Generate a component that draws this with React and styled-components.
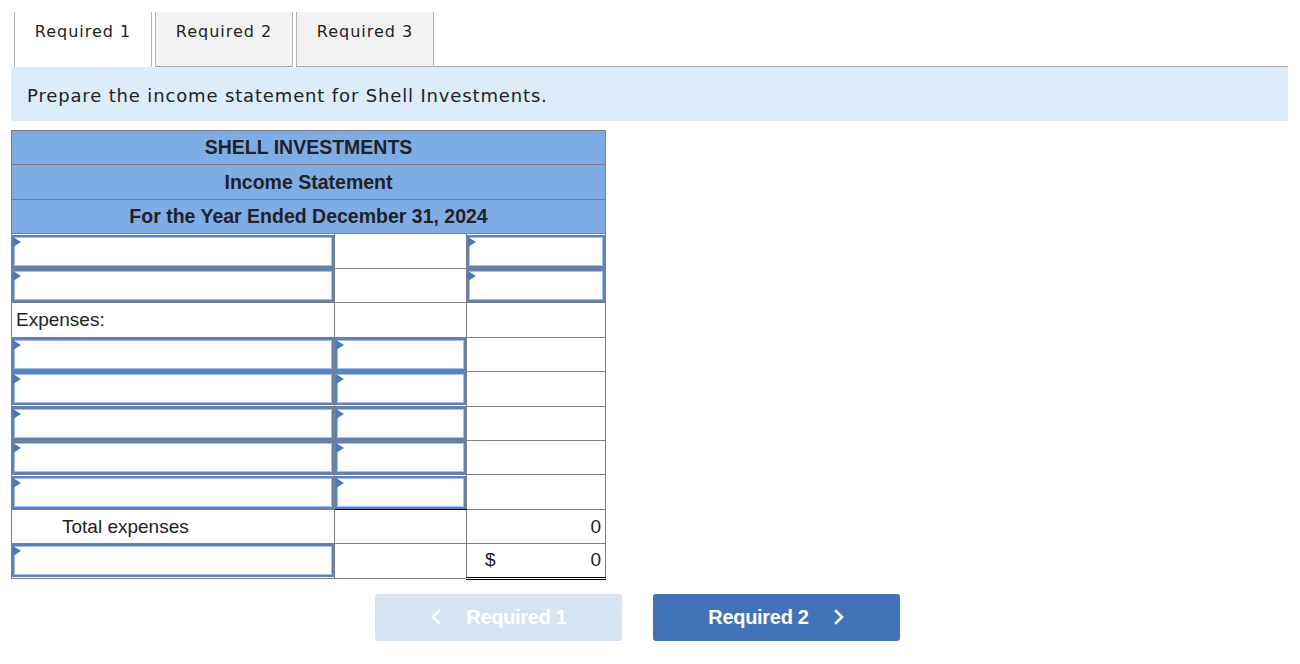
import React from 'react'
import styled, { createGlobalStyle, css } from 'styled-components'

const GlobalStyle = createGlobalStyle`
    body {
        margin: 0;
        background: #fff;
        font-family: "DejaVu Sans", Verdana, sans-serif;
    }
`

const Page = styled.div`
    padding: 12px 12px 0 11px;
`

const TabRow = styled.div`
    display: flex;
    align-items: stretch;
    height: 55px;
`

const Tab = styled.div`
    width: 138px;
    margin-left: 3px;
    display: flex;
    justify-content: center;
    padding-top: 10px;
    box-sizing: border-box;
    font-size: 16px;
    letter-spacing: 1px;
    color: #222;
    border-left: 1px solid #b5b5b5;
    border-right: 1px solid #b5b5b5;
    ${p => p.active ? css`
        background: #fff;
    ` : css`
        background: #f2f2f2;
        border-bottom: 1px solid #a6a6a6;
    `}
`

const TabFiller = styled.div`
    flex: 1;
    border-bottom: 1px solid #a6a6a6;
`

const Instruction = styled.div`
    width: 1277px;
    height: 54px;
    background: #dcecf8;
    display: flex;
    align-items: center;
    padding-left: 16px;
    padding-top: 2px;
    box-sizing: border-box;
    font-size: 18px;
    letter-spacing: 0.85px;
    color: #222;
`

const Table = styled.table`
    margin-top: 9px;
    border-collapse: collapse;
    width: 594px;
    table-layout: fixed;
    font-family: "Liberation Sans", Arial, sans-serif;
    font-size: 19px;
    color: #222;
    tr {
        height: 34.45px;
    }
`

const HeadCell = styled.td`
    background: #7eade6;
    border: 1px solid #7f7f7f;
    text-align: center;
    font-weight: bold;
    font-size: 19.5px;
    padding: 0;
`

const Cell = styled.td`
    border: 1px solid #7f7f7f;
    padding: 0 4px;
    box-sizing: border-box;
    text-align: ${p => p.right ? 'right' : 'left'};
    ${p => p.indent && css`padding-left: 50px;`}
    ${p => p.topBlack && css`border-top: 1px solid #000;`}
    ${p => p.doubleBottom && css`border-bottom: 3px double #000;`}
`

const InputCell = styled.td`
    border: 1px solid #7f7f7f;
    padding: 0;
    ${p => p.bottomBlack && css`border-bottom: 1px solid #000;`}
`

const Field = styled.div`
    position: relative;
    height: 33px;
    box-sizing: border-box;
    border: 2px solid #5683c5;
    box-shadow: inset 0 0 0 1px #a3c0e8;
    background: #fff;
    &::before {
        content: "";
        position: absolute;
        left: -1px;
        top: 0;
        border-top: 5px solid transparent;
        border-bottom: 5px solid transparent;
        border-left: 8px solid #4a78c0;
    }
`

const Dollar = styled.div`
    display: flex;
    justify-content: space-between;
    padding-left: 14px;
`

const ButtonRow = styled.div`
    display: flex;
    gap: 31px;
    margin-top: 14px;
    padding-left: 364px;
`

const NavButton = styled.button`
    width: 247px;
    height: 47px;
    border: none;
    border-radius: 3px;
    display: flex;
    align-items: center;
    justify-content: center;
    gap: 24px;
    font-family: "Liberation Sans", Arial, sans-serif;
    font-weight: bold;
    font-size: 20px;
    letter-spacing: -0.3px;
    color: #fff;
    background: ${p => p.disabled ? '#d6e3f1' : '#4273b9'};
    cursor: ${p => p.disabled ? 'default' : 'pointer'};
    svg {
        width: 12px;
        height: 18px;
    }
`

const Chevron = ({ left }) => (
    <svg viewBox="0 0 12 18" fill="none" stroke="#fff" strokeWidth="2.6" strokeLinecap="square">
        {left ? <polyline points="9,3 3,9 9,15" /> : <polyline points="3,3 9,9 3,15" />}
    </svg>
)

function App() {
    return (
        <Page>
            <GlobalStyle />
            <TabRow>
                <Tab active>Required 1</Tab>
                <Tab>Required 2</Tab>
                <Tab>Required 3</Tab>
                <TabFiller />
            </TabRow>
            <Instruction>Prepare the income statement for Shell Investments.</Instruction>
            <Table>
                <colgroup>
                    <col style={{ width: 323 }} />
                    <col style={{ width: 132 }} />
                    <col style={{ width: 139 }} />
                </colgroup>
                <tbody>
                    <tr><HeadCell colSpan={3}>SHELL INVESTMENTS</HeadCell></tr>
                    <tr><HeadCell colSpan={3}>Income Statement</HeadCell></tr>
                    <tr><HeadCell colSpan={3}>For the Year Ended December 31, 2024</HeadCell></tr>
                    {[0, 1].map(i => (
                        <tr key={'r' + i}>
                            <InputCell><Field /></InputCell>
                            <Cell />
                            <InputCell><Field /></InputCell>
                        </tr>
                    ))}
                    <tr>
                        <Cell>Expenses:</Cell>
                        <Cell />
                        <Cell />
                    </tr>
                    {[0, 1, 2, 3, 4].map(i => (
                        <tr key={'e' + i}>
                            <InputCell><Field /></InputCell>
                            <InputCell bottomBlack={i === 4}><Field /></InputCell>
                            <Cell />
                        </tr>
                    ))}
                    <tr>
                        <Cell indent>Total expenses</Cell>
                        <Cell />
                        <Cell right>0</Cell>
                    </tr>
                    <tr>
                        <InputCell><Field /></InputCell>
                        <Cell />
                        <Cell topBlack doubleBottom><Dollar><span>$</span><span>0</span></Dollar></Cell>
                    </tr>
                </tbody>
            </Table>
            <ButtonRow>
                <NavButton disabled><Chevron left />Required 1</NavButton>
                <NavButton>Required 2<Chevron /></NavButton>
            </ButtonRow>
        </Page>
    )
}

export default App
